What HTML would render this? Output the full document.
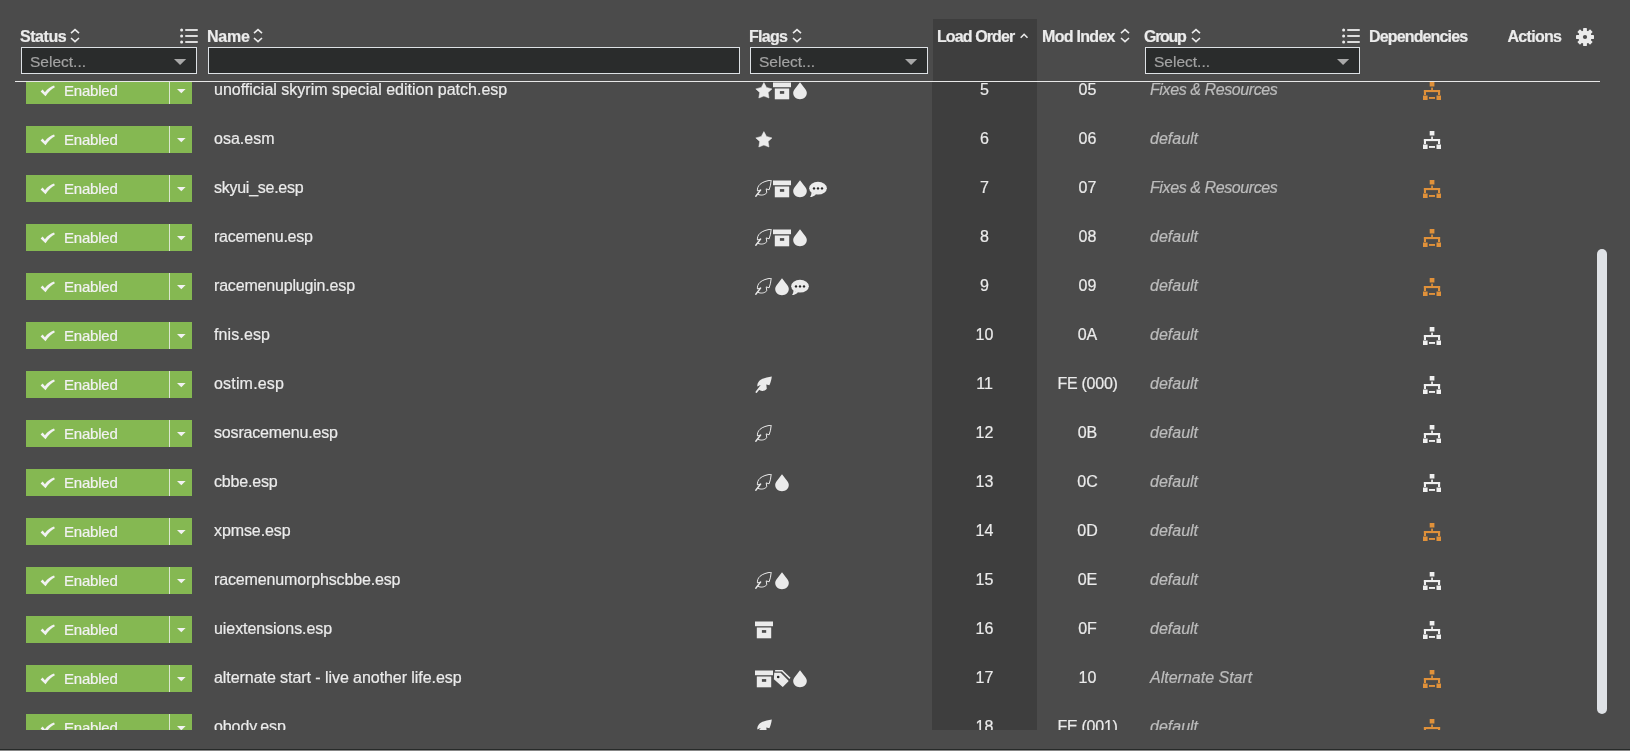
<!DOCTYPE html>
<html><head><meta charset="utf-8"><style>
html,body{margin:0;padding:0}
body{width:1630px;height:751px;background:#4b4b4b;overflow:hidden;position:relative;font-family:"Liberation Sans",sans-serif;color:#ebebeb}
#root{position:absolute;left:0;top:0;width:1630px;height:751px;will-change:transform;-webkit-text-stroke:0.2px currentColor}
.a{position:absolute;white-space:nowrap}
.hd{position:absolute;top:27px;line-height:20px;font-size:16px;font-weight:bold;color:#ebebeb;white-space:nowrap}
.sel{position:absolute;height:25px;border:1px solid #dde1e5;background:#2a2c2c}
.ph{position:absolute;left:8px;top:4px;line-height:20px;font-size:15.5px;color:#a3a3a3}
.btn{position:absolute;left:26px;width:166px;height:27px;background:#85b852}
.btn .dv{position:absolute;left:143px;top:0;width:1px;height:27px;background:#dae6cf}
.btn .lb{position:absolute;left:38px;top:4px;line-height:20px;font-size:15px;letter-spacing:-0.2px;color:#f2f2f2}
.nm{position:absolute;left:214px;line-height:20px;font-size:16px;color:#ebebeb;white-space:nowrap}
.lo{position:absolute;left:932px;width:105px;text-align:center;line-height:20px;font-size:16px}
.mi{position:absolute;left:1037px;width:101px;text-align:center;line-height:20px;font-size:16px}
.gr{position:absolute;left:1150px;line-height:20px;font-size:16px;font-style:italic;color:#bcbcbc;white-space:nowrap}
svg{display:block}
</style></head><body><div id="root">

<div class="a" style="left:933px;top:19px;width:104px;height:62px;background:#3e3e3e"></div>
<div class="a" style="left:0;top:0;width:1630px;height:751px;clip-path:inset(82px 0 21px 0)">
<div class="a" style="left:932px;top:82px;width:105px;height:648px;background:#3e3e3e"></div>
<div class="btn" style="top:77px"><svg style="position:absolute;left:14px;top:8px" width="16" height="12" viewBox="0 0 16 12"><path fill="#f2f2f2" d="M0.6,6.4 L2.6,4.6 L4.9,7.2 C7.6,4 10.8,1.6 14,0.6 L14.9,2.3 C11.6,3.9 8.4,6.8 5.5,11.2 Z"/></svg><span class="lb">Enabled</span><div class="dv"></div><svg style="position:absolute;left:151px;top:12px" width="9" height="5" viewBox="0 0 9 5"><path d="M0,0 L8.6,0 L4.3,4.3 Z" fill="#f2f2f2"/></svg></div>
<div class="nm" style="top:80px">unofficial skyrim special edition patch.esp</div>
<div class="a" style="left:755px;top:81.5px;width:18px;height:18px"><svg width="18" height="18" viewBox="0 0 18 18"><polygon fill="#ebebeb" stroke="#ebebeb" stroke-width="0.5" stroke-linejoin="round" points="8.9,0.6 11.5,5.4 17.0,6.9 13.1,10.5 14.0,16.0 8.9,14.1 3.8,16.0 4.7,10.5 0.8,6.9 6.3,5.4"/></svg></div>
<div class="a" style="left:773px;top:81.5px;width:18px;height:18px"><svg width="18" height="18" viewBox="0 0 18 18"><rect x="0" y="0.5" width="18" height="4.7" fill="#ebebeb"/><rect x="1.8" y="6.5" width="14.4" height="10.8" fill="#ebebeb"/><rect x="6.9" y="9.1" width="4.3" height="2.7" fill="#4b4b4b"/></svg></div>
<div class="a" style="left:791px;top:81.5px;width:18px;height:18px"><svg width="18" height="18" viewBox="0 0 18 18"><path fill="#ebebeb" d="M9,0.2 L3.8,7 C2.8,8.3 2.2,9.7 2.2,11 C2.2,14.6 5.2,17.2 9,17.2 C12.8,17.2 15.8,14.6 15.8,11 C15.8,9.7 15.2,8.3 14.2,7 Z"/></svg></div>
<div class="lo" style="top:80px">5</div>
<div class="mi" style="top:80px">05</div>
<div class="gr" style="top:80px;letter-spacing:-0.4px">Fixes &amp; Resources</div>
<div class="a" style="left:1423px;top:82.0px;width:18px;height:18px"><svg width="18" height="18" viewBox="0 0 18 18"><g fill="#e0913a"><rect x="6.7" y="0" width="4.7" height="4.5"/><rect x="8.2" y="5.6" width="1.7" height="2.5"/><rect x="0.9" y="8" width="16.2" height="2.1"/><rect x="0.9" y="8" width="2.1" height="5"/><rect x="15" y="8" width="2.1" height="5"/><rect x="0" y="13.5" width="4.6" height="4.5"/><rect x="13.5" y="13.5" width="4.6" height="4.5"/><rect x="6" y="15" width="6" height="1.9"/></g></svg></div>
<div class="btn" style="top:126px"><svg style="position:absolute;left:14px;top:8px" width="16" height="12" viewBox="0 0 16 12"><path fill="#f2f2f2" d="M0.6,6.4 L2.6,4.6 L4.9,7.2 C7.6,4 10.8,1.6 14,0.6 L14.9,2.3 C11.6,3.9 8.4,6.8 5.5,11.2 Z"/></svg><span class="lb">Enabled</span><div class="dv"></div><svg style="position:absolute;left:151px;top:12px" width="9" height="5" viewBox="0 0 9 5"><path d="M0,0 L8.6,0 L4.3,4.3 Z" fill="#f2f2f2"/></svg></div>
<div class="nm" style="top:129px">osa.esm</div>
<div class="a" style="left:755px;top:130.5px;width:18px;height:18px"><svg width="18" height="18" viewBox="0 0 18 18"><polygon fill="#ebebeb" stroke="#ebebeb" stroke-width="0.5" stroke-linejoin="round" points="8.9,0.6 11.5,5.4 17.0,6.9 13.1,10.5 14.0,16.0 8.9,14.1 3.8,16.0 4.7,10.5 0.8,6.9 6.3,5.4"/></svg></div>
<div class="lo" style="top:129px">6</div>
<div class="mi" style="top:129px">06</div>
<div class="gr" style="top:129px">default</div>
<div class="a" style="left:1423px;top:131.0px;width:18px;height:18px"><svg width="18" height="18" viewBox="0 0 18 18"><g fill="#f0f0f0"><rect x="6.7" y="0" width="4.7" height="4.5"/><rect x="8.2" y="5.6" width="1.7" height="2.5"/><rect x="0.9" y="8" width="16.2" height="2.1"/><rect x="0.9" y="8" width="2.1" height="5"/><rect x="15" y="8" width="2.1" height="5"/><rect x="0" y="13.5" width="4.6" height="4.5"/><rect x="13.5" y="13.5" width="4.6" height="4.5"/><rect x="6" y="15" width="6" height="1.9"/></g></svg></div>
<div class="btn" style="top:175px"><svg style="position:absolute;left:14px;top:8px" width="16" height="12" viewBox="0 0 16 12"><path fill="#f2f2f2" d="M0.6,6.4 L2.6,4.6 L4.9,7.2 C7.6,4 10.8,1.6 14,0.6 L14.9,2.3 C11.6,3.9 8.4,6.8 5.5,11.2 Z"/></svg><span class="lb">Enabled</span><div class="dv"></div><svg style="position:absolute;left:151px;top:12px" width="9" height="5" viewBox="0 0 9 5"><path d="M0,0 L8.6,0 L4.3,4.3 Z" fill="#f2f2f2"/></svg></div>
<div class="nm" style="top:178px;letter-spacing:-0.26px">skyui_se.esp</div>
<div class="a" style="left:755px;top:179.5px;width:18px;height:18px"><svg width="18" height="18" viewBox="0 0 18 18"><g fill="none" stroke="#ebebeb" stroke-width="1" stroke-linejoin="round" stroke-linecap="round"><path d="M4.6,10.4 L2.4,10.9 C2.2,8.5 3,6 5,4.3 C7.5,2 12,0.6 16.2,0.2 C16,3.5 15.2,7 14.1,9.8 L11.2,8.9 L11.8,12.7 C9.5,15.5 5.5,15.5 3.3,14.5"/><path stroke-width="1.4" d="M0.8,16.2 L5.6,10"/></g></svg></div>
<div class="a" style="left:773px;top:179.5px;width:18px;height:18px"><svg width="18" height="18" viewBox="0 0 18 18"><rect x="0" y="0.5" width="18" height="4.7" fill="#ebebeb"/><rect x="1.8" y="6.5" width="14.4" height="10.8" fill="#ebebeb"/><rect x="6.9" y="9.1" width="4.3" height="2.7" fill="#4b4b4b"/></svg></div>
<div class="a" style="left:791px;top:179.5px;width:18px;height:18px"><svg width="18" height="18" viewBox="0 0 18 18"><path fill="#ebebeb" d="M9,0.2 L3.8,7 C2.8,8.3 2.2,9.7 2.2,11 C2.2,14.6 5.2,17.2 9,17.2 C12.8,17.2 15.8,14.6 15.8,11 C15.8,9.7 15.2,8.3 14.2,7 Z"/></svg></div>
<div class="a" style="left:809px;top:179.5px;width:18px;height:18px"><svg width="18" height="18" viewBox="0 0 18 18"><ellipse cx="9" cy="8.2" rx="8.85" ry="6.4" fill="#ebebeb"/><path fill="#ebebeb" d="M2.4,12.2 C2.6,14 2,15.6 1,17.1 C3.2,16.9 5.4,15.9 7,14.4 Z"/><circle cx="5" cy="8.4" r="1.2" fill="#262626"/><circle cx="9" cy="8.4" r="1.2" fill="#262626"/><circle cx="13" cy="8.4" r="1.2" fill="#262626"/></svg></div>
<div class="lo" style="top:178px">7</div>
<div class="mi" style="top:178px">07</div>
<div class="gr" style="top:178px;letter-spacing:-0.4px">Fixes &amp; Resources</div>
<div class="a" style="left:1423px;top:180.0px;width:18px;height:18px"><svg width="18" height="18" viewBox="0 0 18 18"><g fill="#e0913a"><rect x="6.7" y="0" width="4.7" height="4.5"/><rect x="8.2" y="5.6" width="1.7" height="2.5"/><rect x="0.9" y="8" width="16.2" height="2.1"/><rect x="0.9" y="8" width="2.1" height="5"/><rect x="15" y="8" width="2.1" height="5"/><rect x="0" y="13.5" width="4.6" height="4.5"/><rect x="13.5" y="13.5" width="4.6" height="4.5"/><rect x="6" y="15" width="6" height="1.9"/></g></svg></div>
<div class="btn" style="top:224px"><svg style="position:absolute;left:14px;top:8px" width="16" height="12" viewBox="0 0 16 12"><path fill="#f2f2f2" d="M0.6,6.4 L2.6,4.6 L4.9,7.2 C7.6,4 10.8,1.6 14,0.6 L14.9,2.3 C11.6,3.9 8.4,6.8 5.5,11.2 Z"/></svg><span class="lb">Enabled</span><div class="dv"></div><svg style="position:absolute;left:151px;top:12px" width="9" height="5" viewBox="0 0 9 5"><path d="M0,0 L8.6,0 L4.3,4.3 Z" fill="#f2f2f2"/></svg></div>
<div class="nm" style="top:227px;letter-spacing:-0.22px">racemenu.esp</div>
<div class="a" style="left:755px;top:228.5px;width:18px;height:18px"><svg width="18" height="18" viewBox="0 0 18 18"><g fill="none" stroke="#ebebeb" stroke-width="1" stroke-linejoin="round" stroke-linecap="round"><path d="M4.6,10.4 L2.4,10.9 C2.2,8.5 3,6 5,4.3 C7.5,2 12,0.6 16.2,0.2 C16,3.5 15.2,7 14.1,9.8 L11.2,8.9 L11.8,12.7 C9.5,15.5 5.5,15.5 3.3,14.5"/><path stroke-width="1.4" d="M0.8,16.2 L5.6,10"/></g></svg></div>
<div class="a" style="left:773px;top:228.5px;width:18px;height:18px"><svg width="18" height="18" viewBox="0 0 18 18"><rect x="0" y="0.5" width="18" height="4.7" fill="#ebebeb"/><rect x="1.8" y="6.5" width="14.4" height="10.8" fill="#ebebeb"/><rect x="6.9" y="9.1" width="4.3" height="2.7" fill="#4b4b4b"/></svg></div>
<div class="a" style="left:791px;top:228.5px;width:18px;height:18px"><svg width="18" height="18" viewBox="0 0 18 18"><path fill="#ebebeb" d="M9,0.2 L3.8,7 C2.8,8.3 2.2,9.7 2.2,11 C2.2,14.6 5.2,17.2 9,17.2 C12.8,17.2 15.8,14.6 15.8,11 C15.8,9.7 15.2,8.3 14.2,7 Z"/></svg></div>
<div class="lo" style="top:227px">8</div>
<div class="mi" style="top:227px">08</div>
<div class="gr" style="top:227px">default</div>
<div class="a" style="left:1423px;top:229.0px;width:18px;height:18px"><svg width="18" height="18" viewBox="0 0 18 18"><g fill="#e0913a"><rect x="6.7" y="0" width="4.7" height="4.5"/><rect x="8.2" y="5.6" width="1.7" height="2.5"/><rect x="0.9" y="8" width="16.2" height="2.1"/><rect x="0.9" y="8" width="2.1" height="5"/><rect x="15" y="8" width="2.1" height="5"/><rect x="0" y="13.5" width="4.6" height="4.5"/><rect x="13.5" y="13.5" width="4.6" height="4.5"/><rect x="6" y="15" width="6" height="1.9"/></g></svg></div>
<div class="btn" style="top:273px"><svg style="position:absolute;left:14px;top:8px" width="16" height="12" viewBox="0 0 16 12"><path fill="#f2f2f2" d="M0.6,6.4 L2.6,4.6 L4.9,7.2 C7.6,4 10.8,1.6 14,0.6 L14.9,2.3 C11.6,3.9 8.4,6.8 5.5,11.2 Z"/></svg><span class="lb">Enabled</span><div class="dv"></div><svg style="position:absolute;left:151px;top:12px" width="9" height="5" viewBox="0 0 9 5"><path d="M0,0 L8.6,0 L4.3,4.3 Z" fill="#f2f2f2"/></svg></div>
<div class="nm" style="top:276px;letter-spacing:-0.18px">racemenuplugin.esp</div>
<div class="a" style="left:755px;top:277.5px;width:18px;height:18px"><svg width="18" height="18" viewBox="0 0 18 18"><g fill="none" stroke="#ebebeb" stroke-width="1" stroke-linejoin="round" stroke-linecap="round"><path d="M4.6,10.4 L2.4,10.9 C2.2,8.5 3,6 5,4.3 C7.5,2 12,0.6 16.2,0.2 C16,3.5 15.2,7 14.1,9.8 L11.2,8.9 L11.8,12.7 C9.5,15.5 5.5,15.5 3.3,14.5"/><path stroke-width="1.4" d="M0.8,16.2 L5.6,10"/></g></svg></div>
<div class="a" style="left:773px;top:277.5px;width:18px;height:18px"><svg width="18" height="18" viewBox="0 0 18 18"><path fill="#ebebeb" d="M9,0.2 L3.8,7 C2.8,8.3 2.2,9.7 2.2,11 C2.2,14.6 5.2,17.2 9,17.2 C12.8,17.2 15.8,14.6 15.8,11 C15.8,9.7 15.2,8.3 14.2,7 Z"/></svg></div>
<div class="a" style="left:791px;top:277.5px;width:18px;height:18px"><svg width="18" height="18" viewBox="0 0 18 18"><ellipse cx="9" cy="8.2" rx="8.85" ry="6.4" fill="#ebebeb"/><path fill="#ebebeb" d="M2.4,12.2 C2.6,14 2,15.6 1,17.1 C3.2,16.9 5.4,15.9 7,14.4 Z"/><circle cx="5" cy="8.4" r="1.2" fill="#262626"/><circle cx="9" cy="8.4" r="1.2" fill="#262626"/><circle cx="13" cy="8.4" r="1.2" fill="#262626"/></svg></div>
<div class="lo" style="top:276px">9</div>
<div class="mi" style="top:276px">09</div>
<div class="gr" style="top:276px">default</div>
<div class="a" style="left:1423px;top:278.0px;width:18px;height:18px"><svg width="18" height="18" viewBox="0 0 18 18"><g fill="#e0913a"><rect x="6.7" y="0" width="4.7" height="4.5"/><rect x="8.2" y="5.6" width="1.7" height="2.5"/><rect x="0.9" y="8" width="16.2" height="2.1"/><rect x="0.9" y="8" width="2.1" height="5"/><rect x="15" y="8" width="2.1" height="5"/><rect x="0" y="13.5" width="4.6" height="4.5"/><rect x="13.5" y="13.5" width="4.6" height="4.5"/><rect x="6" y="15" width="6" height="1.9"/></g></svg></div>
<div class="btn" style="top:322px"><svg style="position:absolute;left:14px;top:8px" width="16" height="12" viewBox="0 0 16 12"><path fill="#f2f2f2" d="M0.6,6.4 L2.6,4.6 L4.9,7.2 C7.6,4 10.8,1.6 14,0.6 L14.9,2.3 C11.6,3.9 8.4,6.8 5.5,11.2 Z"/></svg><span class="lb">Enabled</span><div class="dv"></div><svg style="position:absolute;left:151px;top:12px" width="9" height="5" viewBox="0 0 9 5"><path d="M0,0 L8.6,0 L4.3,4.3 Z" fill="#f2f2f2"/></svg></div>
<div class="nm" style="top:325px;letter-spacing:0.12px">fnis.esp</div>
<div class="lo" style="top:325px">10</div>
<div class="mi" style="top:325px">0A</div>
<div class="gr" style="top:325px">default</div>
<div class="a" style="left:1423px;top:327.0px;width:18px;height:18px"><svg width="18" height="18" viewBox="0 0 18 18"><g fill="#f0f0f0"><rect x="6.7" y="0" width="4.7" height="4.5"/><rect x="8.2" y="5.6" width="1.7" height="2.5"/><rect x="0.9" y="8" width="16.2" height="2.1"/><rect x="0.9" y="8" width="2.1" height="5"/><rect x="15" y="8" width="2.1" height="5"/><rect x="0" y="13.5" width="4.6" height="4.5"/><rect x="13.5" y="13.5" width="4.6" height="4.5"/><rect x="6" y="15" width="6" height="1.9"/></g></svg></div>
<div class="btn" style="top:371px"><svg style="position:absolute;left:14px;top:8px" width="16" height="12" viewBox="0 0 16 12"><path fill="#f2f2f2" d="M0.6,6.4 L2.6,4.6 L4.9,7.2 C7.6,4 10.8,1.6 14,0.6 L14.9,2.3 C11.6,3.9 8.4,6.8 5.5,11.2 Z"/></svg><span class="lb">Enabled</span><div class="dv"></div><svg style="position:absolute;left:151px;top:12px" width="9" height="5" viewBox="0 0 9 5"><path d="M0,0 L8.6,0 L4.3,4.3 Z" fill="#f2f2f2"/></svg></div>
<div class="nm" style="top:374px;letter-spacing:0.18px">ostim.esp</div>
<div class="a" style="left:755px;top:375.5px;width:18px;height:18px"><svg width="18" height="18" viewBox="0 0 18 18"><path fill="#ebebeb" d="M16.8,0.4 C12,1 6.5,2.6 4,5.2 C2.6,6.8 2.2,8.7 2.3,10.6 L5.6,8.9 L3.9,13.8 C6,15.6 9.8,15.3 11.8,12.7 L11.3,8.6 L14.4,9.2 C15.6,6.5 16.5,3.5 16.8,0.4 Z"/><path fill="none" stroke="#4b4b4b" stroke-width="1" d="M1.2,15.2 L5.6,9.2"/><path fill="none" stroke="#ebebeb" stroke-width="1.8" stroke-linecap="round" d="M1.4,16 L6.2,9.8"/></svg></div>
<div class="lo" style="top:374px">11</div>
<div class="mi" style="top:374px;letter-spacing:-0.25px">FE (000)</div>
<div class="gr" style="top:374px">default</div>
<div class="a" style="left:1423px;top:376.0px;width:18px;height:18px"><svg width="18" height="18" viewBox="0 0 18 18"><g fill="#f0f0f0"><rect x="6.7" y="0" width="4.7" height="4.5"/><rect x="8.2" y="5.6" width="1.7" height="2.5"/><rect x="0.9" y="8" width="16.2" height="2.1"/><rect x="0.9" y="8" width="2.1" height="5"/><rect x="15" y="8" width="2.1" height="5"/><rect x="0" y="13.5" width="4.6" height="4.5"/><rect x="13.5" y="13.5" width="4.6" height="4.5"/><rect x="6" y="15" width="6" height="1.9"/></g></svg></div>
<div class="btn" style="top:420px"><svg style="position:absolute;left:14px;top:8px" width="16" height="12" viewBox="0 0 16 12"><path fill="#f2f2f2" d="M0.6,6.4 L2.6,4.6 L4.9,7.2 C7.6,4 10.8,1.6 14,0.6 L14.9,2.3 C11.6,3.9 8.4,6.8 5.5,11.2 Z"/></svg><span class="lb">Enabled</span><div class="dv"></div><svg style="position:absolute;left:151px;top:12px" width="9" height="5" viewBox="0 0 9 5"><path d="M0,0 L8.6,0 L4.3,4.3 Z" fill="#f2f2f2"/></svg></div>
<div class="nm" style="top:423px;letter-spacing:-0.17px">sosracemenu.esp</div>
<div class="a" style="left:755px;top:424.5px;width:18px;height:18px"><svg width="18" height="18" viewBox="0 0 18 18"><g fill="none" stroke="#ebebeb" stroke-width="1" stroke-linejoin="round" stroke-linecap="round"><path d="M4.6,10.4 L2.4,10.9 C2.2,8.5 3,6 5,4.3 C7.5,2 12,0.6 16.2,0.2 C16,3.5 15.2,7 14.1,9.8 L11.2,8.9 L11.8,12.7 C9.5,15.5 5.5,15.5 3.3,14.5"/><path stroke-width="1.4" d="M0.8,16.2 L5.6,10"/></g></svg></div>
<div class="lo" style="top:423px">12</div>
<div class="mi" style="top:423px">0B</div>
<div class="gr" style="top:423px">default</div>
<div class="a" style="left:1423px;top:425.0px;width:18px;height:18px"><svg width="18" height="18" viewBox="0 0 18 18"><g fill="#f0f0f0"><rect x="6.7" y="0" width="4.7" height="4.5"/><rect x="8.2" y="5.6" width="1.7" height="2.5"/><rect x="0.9" y="8" width="16.2" height="2.1"/><rect x="0.9" y="8" width="2.1" height="5"/><rect x="15" y="8" width="2.1" height="5"/><rect x="0" y="13.5" width="4.6" height="4.5"/><rect x="13.5" y="13.5" width="4.6" height="4.5"/><rect x="6" y="15" width="6" height="1.9"/></g></svg></div>
<div class="btn" style="top:469px"><svg style="position:absolute;left:14px;top:8px" width="16" height="12" viewBox="0 0 16 12"><path fill="#f2f2f2" d="M0.6,6.4 L2.6,4.6 L4.9,7.2 C7.6,4 10.8,1.6 14,0.6 L14.9,2.3 C11.6,3.9 8.4,6.8 5.5,11.2 Z"/></svg><span class="lb">Enabled</span><div class="dv"></div><svg style="position:absolute;left:151px;top:12px" width="9" height="5" viewBox="0 0 9 5"><path d="M0,0 L8.6,0 L4.3,4.3 Z" fill="#f2f2f2"/></svg></div>
<div class="nm" style="top:472px;letter-spacing:-0.17px">cbbe.esp</div>
<div class="a" style="left:755px;top:473.5px;width:18px;height:18px"><svg width="18" height="18" viewBox="0 0 18 18"><g fill="none" stroke="#ebebeb" stroke-width="1" stroke-linejoin="round" stroke-linecap="round"><path d="M4.6,10.4 L2.4,10.9 C2.2,8.5 3,6 5,4.3 C7.5,2 12,0.6 16.2,0.2 C16,3.5 15.2,7 14.1,9.8 L11.2,8.9 L11.8,12.7 C9.5,15.5 5.5,15.5 3.3,14.5"/><path stroke-width="1.4" d="M0.8,16.2 L5.6,10"/></g></svg></div>
<div class="a" style="left:773px;top:473.5px;width:18px;height:18px"><svg width="18" height="18" viewBox="0 0 18 18"><path fill="#ebebeb" d="M9,0.2 L3.8,7 C2.8,8.3 2.2,9.7 2.2,11 C2.2,14.6 5.2,17.2 9,17.2 C12.8,17.2 15.8,14.6 15.8,11 C15.8,9.7 15.2,8.3 14.2,7 Z"/></svg></div>
<div class="lo" style="top:472px">13</div>
<div class="mi" style="top:472px">0C</div>
<div class="gr" style="top:472px">default</div>
<div class="a" style="left:1423px;top:474.0px;width:18px;height:18px"><svg width="18" height="18" viewBox="0 0 18 18"><g fill="#f0f0f0"><rect x="6.7" y="0" width="4.7" height="4.5"/><rect x="8.2" y="5.6" width="1.7" height="2.5"/><rect x="0.9" y="8" width="16.2" height="2.1"/><rect x="0.9" y="8" width="2.1" height="5"/><rect x="15" y="8" width="2.1" height="5"/><rect x="0" y="13.5" width="4.6" height="4.5"/><rect x="13.5" y="13.5" width="4.6" height="4.5"/><rect x="6" y="15" width="6" height="1.9"/></g></svg></div>
<div class="btn" style="top:518px"><svg style="position:absolute;left:14px;top:8px" width="16" height="12" viewBox="0 0 16 12"><path fill="#f2f2f2" d="M0.6,6.4 L2.6,4.6 L4.9,7.2 C7.6,4 10.8,1.6 14,0.6 L14.9,2.3 C11.6,3.9 8.4,6.8 5.5,11.2 Z"/></svg><span class="lb">Enabled</span><div class="dv"></div><svg style="position:absolute;left:151px;top:12px" width="9" height="5" viewBox="0 0 9 5"><path d="M0,0 L8.6,0 L4.3,4.3 Z" fill="#f2f2f2"/></svg></div>
<div class="nm" style="top:521px;letter-spacing:-0.1px">xpmse.esp</div>
<div class="lo" style="top:521px">14</div>
<div class="mi" style="top:521px">0D</div>
<div class="gr" style="top:521px">default</div>
<div class="a" style="left:1423px;top:523.0px;width:18px;height:18px"><svg width="18" height="18" viewBox="0 0 18 18"><g fill="#e0913a"><rect x="6.7" y="0" width="4.7" height="4.5"/><rect x="8.2" y="5.6" width="1.7" height="2.5"/><rect x="0.9" y="8" width="16.2" height="2.1"/><rect x="0.9" y="8" width="2.1" height="5"/><rect x="15" y="8" width="2.1" height="5"/><rect x="0" y="13.5" width="4.6" height="4.5"/><rect x="13.5" y="13.5" width="4.6" height="4.5"/><rect x="6" y="15" width="6" height="1.9"/></g></svg></div>
<div class="btn" style="top:567px"><svg style="position:absolute;left:14px;top:8px" width="16" height="12" viewBox="0 0 16 12"><path fill="#f2f2f2" d="M0.6,6.4 L2.6,4.6 L4.9,7.2 C7.6,4 10.8,1.6 14,0.6 L14.9,2.3 C11.6,3.9 8.4,6.8 5.5,11.2 Z"/></svg><span class="lb">Enabled</span><div class="dv"></div><svg style="position:absolute;left:151px;top:12px" width="9" height="5" viewBox="0 0 9 5"><path d="M0,0 L8.6,0 L4.3,4.3 Z" fill="#f2f2f2"/></svg></div>
<div class="nm" style="top:570px;letter-spacing:-0.14px">racemenumorphscbbe.esp</div>
<div class="a" style="left:755px;top:571.5px;width:18px;height:18px"><svg width="18" height="18" viewBox="0 0 18 18"><g fill="none" stroke="#ebebeb" stroke-width="1" stroke-linejoin="round" stroke-linecap="round"><path d="M4.6,10.4 L2.4,10.9 C2.2,8.5 3,6 5,4.3 C7.5,2 12,0.6 16.2,0.2 C16,3.5 15.2,7 14.1,9.8 L11.2,8.9 L11.8,12.7 C9.5,15.5 5.5,15.5 3.3,14.5"/><path stroke-width="1.4" d="M0.8,16.2 L5.6,10"/></g></svg></div>
<div class="a" style="left:773px;top:571.5px;width:18px;height:18px"><svg width="18" height="18" viewBox="0 0 18 18"><path fill="#ebebeb" d="M9,0.2 L3.8,7 C2.8,8.3 2.2,9.7 2.2,11 C2.2,14.6 5.2,17.2 9,17.2 C12.8,17.2 15.8,14.6 15.8,11 C15.8,9.7 15.2,8.3 14.2,7 Z"/></svg></div>
<div class="lo" style="top:570px">15</div>
<div class="mi" style="top:570px">0E</div>
<div class="gr" style="top:570px">default</div>
<div class="a" style="left:1423px;top:572.0px;width:18px;height:18px"><svg width="18" height="18" viewBox="0 0 18 18"><g fill="#f0f0f0"><rect x="6.7" y="0" width="4.7" height="4.5"/><rect x="8.2" y="5.6" width="1.7" height="2.5"/><rect x="0.9" y="8" width="16.2" height="2.1"/><rect x="0.9" y="8" width="2.1" height="5"/><rect x="15" y="8" width="2.1" height="5"/><rect x="0" y="13.5" width="4.6" height="4.5"/><rect x="13.5" y="13.5" width="4.6" height="4.5"/><rect x="6" y="15" width="6" height="1.9"/></g></svg></div>
<div class="btn" style="top:616px"><svg style="position:absolute;left:14px;top:8px" width="16" height="12" viewBox="0 0 16 12"><path fill="#f2f2f2" d="M0.6,6.4 L2.6,4.6 L4.9,7.2 C7.6,4 10.8,1.6 14,0.6 L14.9,2.3 C11.6,3.9 8.4,6.8 5.5,11.2 Z"/></svg><span class="lb">Enabled</span><div class="dv"></div><svg style="position:absolute;left:151px;top:12px" width="9" height="5" viewBox="0 0 9 5"><path d="M0,0 L8.6,0 L4.3,4.3 Z" fill="#f2f2f2"/></svg></div>
<div class="nm" style="top:619px;letter-spacing:-0.07px">uiextensions.esp</div>
<div class="a" style="left:755px;top:620.5px;width:18px;height:18px"><svg width="18" height="18" viewBox="0 0 18 18"><rect x="0" y="0.5" width="18" height="4.7" fill="#ebebeb"/><rect x="1.8" y="6.5" width="14.4" height="10.8" fill="#ebebeb"/><rect x="6.9" y="9.1" width="4.3" height="2.7" fill="#4b4b4b"/></svg></div>
<div class="lo" style="top:619px">16</div>
<div class="mi" style="top:619px">0F</div>
<div class="gr" style="top:619px">default</div>
<div class="a" style="left:1423px;top:621.0px;width:18px;height:18px"><svg width="18" height="18" viewBox="0 0 18 18"><g fill="#f0f0f0"><rect x="6.7" y="0" width="4.7" height="4.5"/><rect x="8.2" y="5.6" width="1.7" height="2.5"/><rect x="0.9" y="8" width="16.2" height="2.1"/><rect x="0.9" y="8" width="2.1" height="5"/><rect x="15" y="8" width="2.1" height="5"/><rect x="0" y="13.5" width="4.6" height="4.5"/><rect x="13.5" y="13.5" width="4.6" height="4.5"/><rect x="6" y="15" width="6" height="1.9"/></g></svg></div>
<div class="btn" style="top:665px"><svg style="position:absolute;left:14px;top:8px" width="16" height="12" viewBox="0 0 16 12"><path fill="#f2f2f2" d="M0.6,6.4 L2.6,4.6 L4.9,7.2 C7.6,4 10.8,1.6 14,0.6 L14.9,2.3 C11.6,3.9 8.4,6.8 5.5,11.2 Z"/></svg><span class="lb">Enabled</span><div class="dv"></div><svg style="position:absolute;left:151px;top:12px" width="9" height="5" viewBox="0 0 9 5"><path d="M0,0 L8.6,0 L4.3,4.3 Z" fill="#f2f2f2"/></svg></div>
<div class="nm" style="top:668px;letter-spacing:-0.06px">alternate start - live another life.esp</div>
<div class="a" style="left:755px;top:669.5px;width:18px;height:18px"><svg width="18" height="18" viewBox="0 0 18 18"><rect x="0" y="0.5" width="18" height="4.7" fill="#ebebeb"/><rect x="1.8" y="6.5" width="14.4" height="10.8" fill="#ebebeb"/><rect x="6.9" y="9.1" width="4.3" height="2.7" fill="#4b4b4b"/></svg></div>
<div class="a" style="left:773px;top:669.5px;width:18px;height:18px"><svg width="18" height="18" viewBox="0 0 18 18"><path fill="#ebebeb" d="M1.2,2.8 L7.7,2.8 L15.3,10.4 Q15.8,11 15.3,11.6 L10.3,16.6 Q9.7,17.2 9.1,16.6 L0.9,9.3 Z"/><circle cx="5.2" cy="7" r="1.3" fill="#262626"/><path fill="none" stroke="#ebebeb" stroke-width="1.5" d="M2.1,0.75 L9.1,0.75 L17,8.4"/></svg></div>
<div class="a" style="left:791px;top:669.5px;width:18px;height:18px"><svg width="18" height="18" viewBox="0 0 18 18"><path fill="#ebebeb" d="M9,0.2 L3.8,7 C2.8,8.3 2.2,9.7 2.2,11 C2.2,14.6 5.2,17.2 9,17.2 C12.8,17.2 15.8,14.6 15.8,11 C15.8,9.7 15.2,8.3 14.2,7 Z"/></svg></div>
<div class="lo" style="top:668px">17</div>
<div class="mi" style="top:668px">10</div>
<div class="gr" style="top:668px">Alternate Start</div>
<div class="a" style="left:1423px;top:670.0px;width:18px;height:18px"><svg width="18" height="18" viewBox="0 0 18 18"><g fill="#e0913a"><rect x="6.7" y="0" width="4.7" height="4.5"/><rect x="8.2" y="5.6" width="1.7" height="2.5"/><rect x="0.9" y="8" width="16.2" height="2.1"/><rect x="0.9" y="8" width="2.1" height="5"/><rect x="15" y="8" width="2.1" height="5"/><rect x="0" y="13.5" width="4.6" height="4.5"/><rect x="13.5" y="13.5" width="4.6" height="4.5"/><rect x="6" y="15" width="6" height="1.9"/></g></svg></div>
<div class="btn" style="top:714px"><svg style="position:absolute;left:14px;top:8px" width="16" height="12" viewBox="0 0 16 12"><path fill="#f2f2f2" d="M0.6,6.4 L2.6,4.6 L4.9,7.2 C7.6,4 10.8,1.6 14,0.6 L14.9,2.3 C11.6,3.9 8.4,6.8 5.5,11.2 Z"/></svg><span class="lb">Enabled</span><div class="dv"></div><svg style="position:absolute;left:151px;top:12px" width="9" height="5" viewBox="0 0 9 5"><path d="M0,0 L8.6,0 L4.3,4.3 Z" fill="#f2f2f2"/></svg></div>
<div class="nm" style="top:717px;letter-spacing:-0.1px">obody.esp</div>
<div class="a" style="left:755px;top:718.5px;width:18px;height:18px"><svg width="18" height="18" viewBox="0 0 18 18"><path fill="#ebebeb" d="M16.8,0.4 C12,1 6.5,2.6 4,5.2 C2.6,6.8 2.2,8.7 2.3,10.6 L5.6,8.9 L3.9,13.8 C6,15.6 9.8,15.3 11.8,12.7 L11.3,8.6 L14.4,9.2 C15.6,6.5 16.5,3.5 16.8,0.4 Z"/><path fill="none" stroke="#4b4b4b" stroke-width="1" d="M1.2,15.2 L5.6,9.2"/><path fill="none" stroke="#ebebeb" stroke-width="1.8" stroke-linecap="round" d="M1.4,16 L6.2,9.8"/></svg></div>
<div class="lo" style="top:717px">18</div>
<div class="mi" style="top:717px;letter-spacing:-0.25px">FE (001)</div>
<div class="gr" style="top:717px">default</div>
<div class="a" style="left:1423px;top:719.0px;width:18px;height:18px"><svg width="18" height="18" viewBox="0 0 18 18"><g fill="#e0913a"><rect x="6.7" y="0" width="4.7" height="4.5"/><rect x="8.2" y="5.6" width="1.7" height="2.5"/><rect x="0.9" y="8" width="16.2" height="2.1"/><rect x="0.9" y="8" width="2.1" height="5"/><rect x="15" y="8" width="2.1" height="5"/><rect x="0" y="13.5" width="4.6" height="4.5"/><rect x="13.5" y="13.5" width="4.6" height="4.5"/><rect x="6" y="15" width="6" height="1.9"/></g></svg></div>
</div>
<div class="hd" style="left:20px;letter-spacing:-0.45px">Status</div>
<svg style="position:absolute;left:70px;top:28px" width="10" height="15" viewBox="0 0 10 15"><path fill="none" stroke="#ebebeb" stroke-width="1.6" d="M1,5.2 L5,1.6 L9,5.2 M1,10 L5,13.6 L9,10"/></svg>
<svg style="position:absolute;left:179.5px;top:28px" width="19" height="16" viewBox="0 0 19 16"><g fill="#ebebeb"><circle cx="1.6" cy="2" r="1.5"/><circle cx="1.6" cy="8" r="1.5"/><circle cx="1.6" cy="14" r="1.5"/><g fill="#dcdcdc"><rect x="5" y="1" width="13" height="2.1" rx="1"/><rect x="5" y="7" width="13" height="2.1" rx="1"/><rect x="5" y="13" width="13" height="2.1" rx="1"/></g></g></svg>
<div class="hd" style="left:207px;letter-spacing:-0.25px">Name</div>
<svg style="position:absolute;left:253px;top:28px" width="10" height="15" viewBox="0 0 10 15"><path fill="none" stroke="#ebebeb" stroke-width="1.6" d="M1,5.2 L5,1.6 L9,5.2 M1,10 L5,13.6 L9,10"/></svg>
<div class="hd" style="left:749px;letter-spacing:-0.7px">Flags</div>
<svg style="position:absolute;left:792px;top:28px" width="10" height="15" viewBox="0 0 10 15"><path fill="none" stroke="#ebebeb" stroke-width="1.6" d="M1,5.2 L5,1.6 L9,5.2 M1,10 L5,13.6 L9,10"/></svg>
<div class="hd" style="left:937px;letter-spacing:-0.9px">Load Order</div>
<svg style="position:absolute;left:1020px;top:33px" width="9" height="6" viewBox="0 0 9 6"><path fill="none" stroke="#ebebeb" stroke-width="1.6" d="M0.7,4.7 L4.1,1.3 L7.5,4.7"/></svg>
<div class="hd" style="left:1042px;letter-spacing:-0.7px">Mod Index</div>
<svg style="position:absolute;left:1120px;top:28px" width="10" height="15" viewBox="0 0 10 15"><path fill="none" stroke="#ebebeb" stroke-width="1.6" d="M1,5.2 L5,1.6 L9,5.2 M1,10 L5,13.6 L9,10"/></svg>
<div class="hd" style="left:1144px;letter-spacing:-1.3px">Group</div>
<svg style="position:absolute;left:1191px;top:28px" width="10" height="15" viewBox="0 0 10 15"><path fill="none" stroke="#ebebeb" stroke-width="1.6" d="M1,5.2 L5,1.6 L9,5.2 M1,10 L5,13.6 L9,10"/></svg>
<svg style="position:absolute;left:1341.5px;top:28px" width="19" height="16" viewBox="0 0 19 16"><g fill="#ebebeb"><circle cx="1.6" cy="2" r="1.5"/><circle cx="1.6" cy="8" r="1.5"/><circle cx="1.6" cy="14" r="1.5"/><g fill="#dcdcdc"><rect x="5" y="1" width="13" height="2.1" rx="1"/><rect x="5" y="7" width="13" height="2.1" rx="1"/><rect x="5" y="13" width="13" height="2.1" rx="1"/></g></g></svg>
<div class="hd" style="left:1369px;letter-spacing:-0.85px">Dependencies</div>
<div class="hd" style="left:1507.5px;letter-spacing:-0.7px">Actions</div>
<svg style="position:absolute;left:1576px;top:28px" width="18" height="18" viewBox="0 0 18 18"><g fill="#ebebeb"><circle cx="9" cy="9" r="6.6"/><rect x="7.1" y="0" width="3.8" height="18" rx="0.4"/><rect x="7.1" y="0" width="3.8" height="18" rx="0.4" transform="rotate(45 9 9)"/><rect x="7.1" y="0" width="3.8" height="18" rx="0.4" transform="rotate(90 9 9)"/><rect x="7.1" y="0" width="3.8" height="18" rx="0.4" transform="rotate(135 9 9)"/></g><circle cx="9" cy="9" r="2.1" fill="#4b4b4b"/></svg>
<div class="sel" style="left:21px;top:47px;width:174px"><span class="ph">Select...</span><svg style="position:absolute;right:9px;top:11px" width="13" height="7" viewBox="0 0 13 7"><path d="M0,0 L12.2,0 L6.1,6.1 Z" fill="#a8a8a8"/></svg></div>
<div class="sel" style="left:208px;top:47px;width:530px"></div>
<div class="sel" style="left:750px;top:47px;width:176px"><span class="ph">Select...</span><svg style="position:absolute;right:9px;top:11px" width="13" height="7" viewBox="0 0 13 7"><path d="M0,0 L12.2,0 L6.1,6.1 Z" fill="#a8a8a8"/></svg></div>
<div class="sel" style="left:1145px;top:47px;width:213px"><span class="ph">Select...</span><svg style="position:absolute;right:9px;top:11px" width="13" height="7" viewBox="0 0 13 7"><path d="M0,0 L12.2,0 L6.1,6.1 Z" fill="#a8a8a8"/></svg></div>
<div class="a" style="left:15px;top:81px;width:1585px;height:1px;background:#e8e8e8"></div>
<div class="a" style="left:1597px;top:249px;width:10px;height:465px;border-radius:5px;background:#dfe2e6"></div>
<div class="a" style="left:0;top:749px;width:1630px;height:1px;background:#272a29"></div>
<div class="a" style="left:0;top:750px;width:1630px;height:1px;background:#878787"></div>
</div></body></html>
